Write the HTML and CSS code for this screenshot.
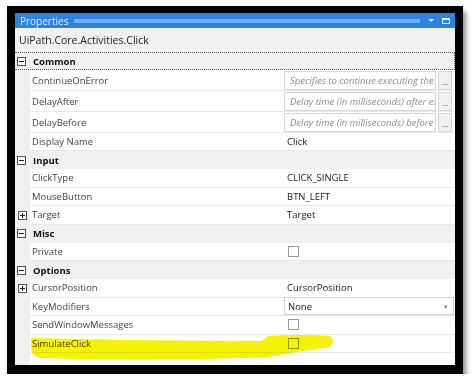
FILE: index.html
```html
<!DOCTYPE html>
<html>
<head>
<meta charset="utf-8">
<link rel="stylesheet" href="styles.css">
</head>
<body>
<div class="stage">
  <div class="frame">
    <div class="panel">
      <div class="title">
        <span class="title-text">Properties</span>
        <span class="grip"></span>
        <span class="tarrow"></span>
        <span class="pin"></span>
      </div>
      <div class="desc">UiPath.Core.Activities.Click</div>

      <div class="cat focus"><span class="exp minus"></span><span class="cat-name">Common</span></div>
      <div class="row tall"><div class="gut"></div><div class="name">ContinueOnError</div><div class="val"><span class="inp">Specifies to continue executing the remaining activities</span><span class="dots">...</span></div></div>
      <div class="row tall"><div class="gut"></div><div class="name">DelayAfter</div><div class="val"><span class="inp">Delay time (in milliseconds) after executing the activity</span><span class="dots">...</span></div></div>
      <div class="row tall"><div class="gut"></div><div class="name">DelayBefore</div><div class="val"><span class="inp">Delay time (in milliseconds) before the activity</span><span class="dots">...</span></div></div>
      <div class="row short"><div class="gut"></div><div class="name">Display Name</div><div class="val"><span class="txt">Click</span></div></div>

      <div class="cat"><span class="exp minus"></span><span class="cat-name">Input</span></div>
      <div class="row"><div class="gut"></div><div class="name">ClickType</div><div class="val"><span class="txt">CLICK_SINGLE</span></div></div>
      <div class="row"><div class="gut"></div><div class="name">MouseButton</div><div class="val"><span class="txt">BTN_LEFT</span></div></div>
      <div class="row"><div class="gut"><span class="exp plus"></span></div><div class="name">Target</div><div class="val"><span class="txt">Target</span></div></div>

      <div class="cat"><span class="exp minus"></span><span class="cat-name">Misc</span></div>
      <div class="row"><div class="gut"></div><div class="name">Private</div><div class="val"><span class="chk"></span></div></div>

      <div class="cat"><span class="exp minus"></span><span class="cat-name">Options</span></div>
      <div class="row"><div class="gut"><span class="exp plus"></span></div><div class="name">CursorPosition</div><div class="val"><span class="txt">CursorPosition</span></div></div>
      <div class="row"><div class="gut"></div><div class="name">KeyModifiers</div><div class="val"><span class="combo"><span>None</span><span class="caret">&#9662;</span></span></div></div>
      <div class="row"><div class="gut"></div><div class="name">SendWindowMessages</div><div class="val"><span class="chk"></span></div></div>
      <div class="row"><div class="gut"></div><div class="name">SimulateClick</div><div class="val"><span class="chk"></span></div></div>
      <div class="filler"><div class="gut"></div></div>

      <svg class="hl" width="440" height="352" viewBox="0 0 440 352">
        <path d="M16,325 Q135,328 247,328 L253,323 Q285,321 315,323 Q321,328 315,334 Q285,338 253,344 Q135,349 25,345 Q16,342 16,335 Z" fill="#f6f300"/>
      </svg>
    </div>
  </div>
</div>
</body>
</html>
```

FILE: styles.css
```css
html, body {
  margin: 0;
  padding: 0;
  background: #ffffff;
}

.stage {
  padding: 6px 0 0 7px;
}

.frame {
  width: 440px;
  height: 352px;
  border-style: solid;
  border-color: #000;
  border-width: 7px 8px 9px 8px;
  box-shadow: 3px 5px 5px rgba(0, 0, 0, 0.45);
  background: #fff;
}

.panel {
  position: relative;
  width: 440px;
  height: 352px;
  display: flex;
  flex-direction: column;
  overflow: hidden;
  font-family: "Open Sans", "Noto Sans", sans-serif;
  font-size: 9.5px;
  color: #3a3a3a;
}

.title {
  height: 15px;
  flex: none;
  background: #2f83e0;
  display: flex;
  align-items: center;
  padding: 0 3px 0 5px;
}

.title-text {
  color: #e4eeff;
  font-size: 10px;
}

.grip {
  flex: 1;
  height: 4px;
  margin: 0 8px 0 6px;
  background-image: radial-gradient(circle, rgba(255, 255, 255, 0.35) 0.7px, transparent 0.9px);
  background-size: 2px 2px;
}

.tarrow {
  width: 0;
  height: 0;
  border-left: 3px solid transparent;
  border-right: 3px solid transparent;
  border-top: 3px solid #e4eeff;
  margin-right: 8px;
}

.pin {
  width: 6px;
  height: 3px;
  border: 1px solid #e4eeff;
  border-top-width: 2px;
  margin-right: 2px;
}

.desc {
  height: 24px;
  flex: none;
  background: #f0f0f0;
  color: #222;
  font-size: 10.5px;
  display: flex;
  align-items: center;
  padding-left: 4px;
}

.cat {
  height: 18px;
  flex: none;
  box-sizing: border-box;
  background: #f0f0f0;
  display: flex;
  align-items: center;
  padding-left: 2px;
  color: #111;
  font-weight: 700;
}

.cat.focus {
  border-top: 1px dotted #555;
  border-bottom: 1px dotted #555;
  border-right: 1px dotted #555;
}

.cat-name {
  margin-left: 7px;
}

.exp {
  position: relative;
  display: inline-block;
  width: 7px;
  height: 7px;
  border: 1px solid #555;
  background: #fff;
  box-sizing: content-box;
  flex: none;
}

.exp::before {
  content: "";
  position: absolute;
  left: 1px;
  top: 3px;
  width: 5px;
  height: 1px;
  background: #222;
}

.exp.plus::after {
  content: "";
  position: absolute;
  left: 3px;
  top: 1px;
  width: 1px;
  height: 5px;
  background: #222;
}

.row {
  height: 18.5px;
  flex: none;
  display: flex;
}

.row.tall {
  height: 21px;
}

.row.short {
  height: 18px;
}

.gut {
  width: 15px;
  flex: none;
  background: #f0f0f0;
  display: flex;
  align-items: center;
  padding-left: 3px;
  box-sizing: border-box;
}

.name {
  width: 254px;
  flex: none;
  box-sizing: border-box;
  border-bottom: 1px solid #e8e8e8;
  padding-left: 2px;
  display: flex;
  align-items: center;
  color: #444;
}

.val {
  flex: 1;
  box-sizing: border-box;
  border-bottom: 1px solid #e8e8e8;
  display: flex;
  align-items: center;
  color: #222;
}

.txt {
  padding-left: 3px;
}

.inp {
  width: 152px;
  height: 19px;
  box-sizing: border-box;
  border: 1px solid #d6d6d6;
  background: #fff;
  font-style: italic;
  color: #8c8c8c;
  white-space: nowrap;
  overflow: hidden;
  padding-left: 5px;
  display: flex;
  align-items: center;
}

.dots {
  width: 14px;
  height: 19px;
  box-sizing: border-box;
  margin-left: 2px;
  border: 1px solid #d6d6d6;
  background: #f0f0f0;
  color: #444;
  font-size: 8px;
  line-height: 1;
  display: flex;
  justify-content: center;
  align-items: flex-end;
  padding-bottom: 3px;
}

.chk {
  width: 11px;
  height: 11px;
  box-sizing: border-box;
  border: 1px solid #9a9a9a;
  background: #fff;
  margin-left: 4px;
}

.combo {
  width: 170px;
  height: 18px;
  box-sizing: border-box;
  border: 1px solid #cfcfcf;
  background: #fff;
  display: flex;
  align-items: center;
  justify-content: space-between;
  padding: 0 5px 0 3px;
}

.caret {
  color: #888;
  font-size: 7px;
}

.filler {
  flex: 1;
  display: flex;
}

.hl {
  position: absolute;
  left: 0;
  top: 0;
  pointer-events: none;
  mix-blend-mode: multiply;
}
```
